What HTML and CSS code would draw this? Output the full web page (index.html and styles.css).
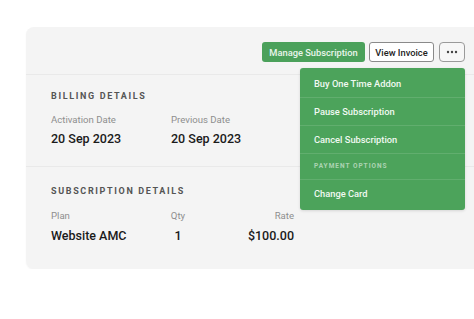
FILE: index.html
```html
<!DOCTYPE html>
<html>
<head>
<meta charset="utf-8">
<link rel="stylesheet" href="styles.css">
</head>
<body>
<div class="page">
  <div class="card">
    <div class="header">
      <button class="btn btn-primary">Manage Subscription</button>
      <button class="btn btn-outline">View Invoice</button>
      <button class="btn btn-more" aria-label="More">
        <svg width="12" height="4" viewBox="0 0 12 4"><circle cx="2" cy="2" r="1.2" fill="#444"/><circle cx="6" cy="2" r="1.2" fill="#444"/><circle cx="10" cy="2" r="1.2" fill="#444"/></svg>
      </button>
    </div>
    <div class="menu">
      <div class="menu-item">Buy One Time Addon</div>
      <div class="menu-item">Pause Subscription</div>
      <div class="menu-item">Cancel Subscription</div>
      <div class="menu-label">PAYMENT OPTIONS</div>
      <div class="menu-item last">Change Card</div>
    </div>
    <section class="section billing">
      <h3 class="title">BILLING DETAILS</h3>
      <div class="dates">
        <div class="field">
          <div class="label">Activation Date</div>
          <div class="value">20 Sep 2023</div>
        </div>
        <div class="field">
          <div class="label">Previous Date</div>
          <div class="value">20 Sep 2023</div>
        </div>
      </div>
    </section>
    <section class="section subs">
      <h3 class="title">SUBSCRIPTION DETAILS</h3>
      <div class="table">
        <div class="label c-plan">Plan</div>
        <div class="label c-qty">Qty</div>
        <div class="label c-rate">Rate</div>
        <div class="value c-plan">Website AMC</div>
        <div class="value c-qty">1</div>
        <div class="value c-rate">$100.00</div>
      </div>
    </section>
  </div>
</div>
</body>
</html>
```

FILE: styles.css
```css
* { box-sizing: border-box; }
html, body {
  margin: 0;
  padding: 0;
  background: #ffffff;
  overflow: hidden;
}
body {
  font-family: Roboto, "Noto Sans", sans-serif;
  color: #111;
  -webkit-font-smoothing: antialiased;
}
.page {
  padding: 27px 0 0 26px;
}
.card {
  position: relative;
  width: 448px;
  height: 242px;
  background: #f4f4f4;
  border-radius: 8px 0 0 8px;
  box-shadow: 0 1px 2px rgba(0,0,0,0.04);
}
.header {
  height: 48px;
  border-bottom: 1px solid #e9e9e9;
  display: flex;
  justify-content: flex-end;
  align-items: flex-start;
  padding: 15px 9px 0 0;
}
.btn {
  font-family: inherit;
  height: 20px;
  border-radius: 3px;
  font-size: 9.3px;
  font-weight: 500;
  padding: 0;
  display: flex;
  align-items: center;
  justify-content: center;
  cursor: pointer;
}
.btn-primary {
  width: 103px;
  background: #4ba15b;
  color: #e9f5eb;
  border: none;
}
.btn-outline {
  width: 65px;
  margin-left: 4px;
  background: #ffffff;
  color: #222;
  border: 1px solid #8a8a8a;
}
.btn-more {
  width: 26px;
  margin-left: 5px;
  background: #f7f7f7;
  border: 1px solid #9a9a9a;
  border-radius: 4px;
}
.menu {
  position: absolute;
  top: 41px;
  left: 274px;
  width: 165px;
  background: #4ca35b;
  border-radius: 3px;
  padding: 2px 0 3px;
  box-shadow: 0 1px 3px rgba(0,0,0,0.12);
  z-index: 2;
}
.menu-item {
  height: 28px;
  line-height: 27px;
  padding-left: 14px;
  font-size: 9.3px;
  font-weight: 500;
  color: #f1f9f2;
  border-bottom: 1px solid rgba(255,255,255,0.12);
}
.menu-item.last {
  border-bottom: none;
  height: 27px;
}
.menu-label {
  height: 26px;
  line-height: 25px;
  padding-left: 14px;
  font-size: 6.5px;
  font-weight: 700;
  letter-spacing: 1px;
  color: rgba(255,255,255,0.55);
  border-bottom: 1px solid rgba(255,255,255,0.12);
}
.section {
  padding-left: 25px;
}
.billing {
  padding-top: 15px;
  height: 92px;
  border-bottom: 1px solid #e9e9e9;
}
.subs {
  padding-top: 18px;
}
.title {
  margin: 0;
  font-size: 9px;
  line-height: 12px;
  font-weight: 700;
  letter-spacing: 1.65px;
  color: #555;
}
.dates {
  display: flex;
  margin-top: 12px;
}
.field {
  width: 120px;
}
.label {
  font-size: 9.6px;
  line-height: 12px;
  color: #8e8e8e;
}
.value {
  font-size: 12.5px;
  line-height: 16px;
  font-weight: 500;
  color: #1a1a1a;
}
.dates .value {
  margin-top: 5px;
}
.table {
  margin-top: 13px;
  width: 243px;
  display: grid;
  grid-template-columns: 100px 54px 89px;
  row-gap: 6px;
}
.c-qty { text-align: center; }
.c-rate { text-align: right; }
```
